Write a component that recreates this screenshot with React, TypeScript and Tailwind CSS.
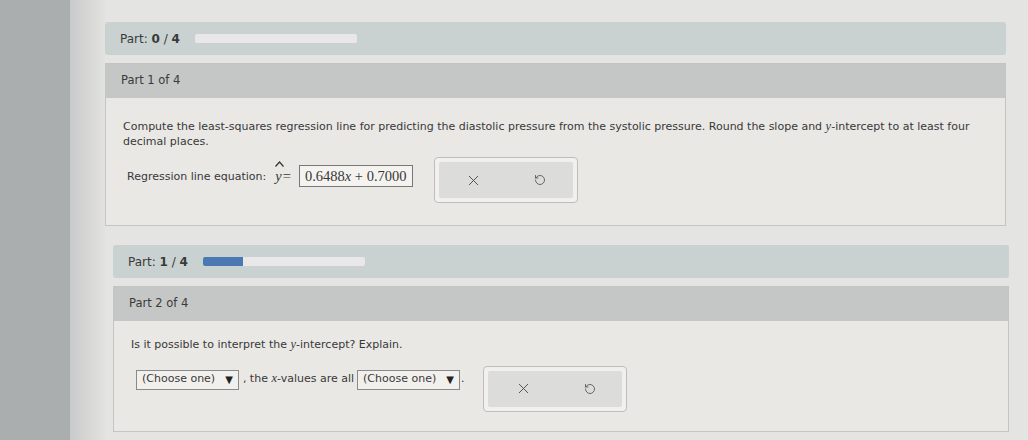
import { RotateCcw, X } from "lucide-react";

const sans = "font-['DejaVu_Sans','Verdana',sans-serif]";
const serif = "font-['Liberation_Serif','Times_New_Roman',serif]";

function Progress({ done, total }: { done: number; total: number }) {
  return (
    <div className="flex h-[33px] items-center rounded-[3px] bg-[#c9d2d1] pl-[15px]">
      <span className={`${sans} text-[12px] text-[#3a3a3a]`}>
        Part: <b>{done}</b> / <b>{total}</b>
      </span>
      <div className="ml-[15px] h-[9px] w-[162px] overflow-hidden rounded-[2px] bg-[#e9e7e7]">
        <div className="h-full bg-[#4a78b2]" style={{ width: `${(done / total) * 100}%` }} />
      </div>
    </div>
  );
}

function Actions() {
  return (
    <div className="rounded-[4px] border border-[#bdbdbb] bg-[#f1f0ee] p-[4px]">
      <div className="flex h-[36px] w-[134px] items-center justify-around rounded-[2px] bg-[#dcdcda] text-[#4a4a4a]">
        <X size={17} strokeWidth={1.3} />
        <RotateCcw size={12} strokeWidth={1.6} />
      </div>
    </div>
  );
}

function Choose() {
  return (
    <span className="inline-flex h-[20px] items-center gap-[10px] border border-[#8a8a8a] bg-[#f1f0ed] px-[5px] text-[11px] text-[#3a3a3a]">
      (Choose one)
      <span className="text-[10px] text-[#222]">▼</span>
    </span>
  );
}

function Panel({ title, children }: { title: string; children: React.ReactNode }) {
  return (
    <div className="mt-[8px] border border-[#c4c4c2]">
      <div className={`${sans} flex h-[34px] items-center bg-[#c4c7c6] pl-[15px] text-[11.5px] text-[#3a3a3a]`}>
        {title}
      </div>
      {children}
    </div>
  );
}

// italic math variable inside running text
function V({ children }: { children: string }) {
  return <i className={`${serif} text-[12.5px] leading-none`}>{children}</i>;
}

// y with a hat over it, for the fitted value
function YHat() {
  return (
    <span className={`${serif} relative ml-[9px] text-[14.5px] italic`}>
      y
      <svg className="absolute -top-[8px] left-[0px]" width="9" height="6" viewBox="0 0 9 6">
        <path d="M0.5 5.5 L4.5 1 L8.5 5.5" fill="none" stroke="#333" strokeWidth="1.2" />
      </svg>
    </span>
  );
}

export default function App() {
  return (
    <div className={`${sans} flex h-[440px] w-[1028px] overflow-hidden bg-[#e4e4e2]`}>
      <div className="w-[70px] bg-[#abaeae]" />
      <div className="w-[35px] bg-gradient-to-r from-[#c9cbca] to-[#e2e2e0]" />
      <div className="flex-1 pr-[22px] pt-[22px]">
        <Progress done={0} total={4} />
        <Panel title="Part 1 of 4">
          <div className="h-[127px] bg-[#e9e8e5] pl-[17px] pr-[20px] pt-[21px] text-[11px] leading-[15px] text-[#383838]">
            <p>
              Compute the least-squares regression line for predicting the diastolic pressure from the systolic pressure.
              Round the slope and <V>y</V>-intercept to at least four decimal places.
            </p>
            <div className="mt-[11px] flex items-start">
              <div className="mt-[5px] flex items-center">
                <span className="ml-[4px]">Regression line equation:</span>
                <YHat />
                <span className={`${serif} ml-[1px] text-[14.5px]`}>=</span>
                <span className={`${serif} ml-[8px] border border-[#777] bg-[#f4f3f0] px-[5px] text-[14.5px] leading-[20px]`}>
                  0.6488<i>x</i> + 0.7000
                </span>
              </div>
              <div className="ml-[21px] -mt-[3px]">
                <Actions />
              </div>
            </div>
          </div>
        </Panel>

        <div className="mt-[19px] ml-[8px] mr-[-3px]">
          <Progress done={1} total={4} />
          <Panel title="Part 2 of 4">
            <div className="h-[110px] bg-[#e9e8e5] pl-[17px] pt-[16px] text-[11px] text-[#383838]">
              <p>
                Is it possible to interpret the <V>y</V>-intercept? Explain.
              </p>
              <div className="mt-[12px] flex items-start">
                <div className="mt-[4px] ml-[5px] flex items-center">
                  <Choose />
                  <span className="ml-[4px] mr-[3px]">
                    , the <V>x</V>-values are all
                  </span>
                  <Choose />
                  <span className="ml-[1px]">.</span>
                </div>
                <div className="ml-[19px]">
                  <Actions />
                </div>
              </div>
            </div>
          </Panel>
        </div>
      </div>
    </div>
  );
}
